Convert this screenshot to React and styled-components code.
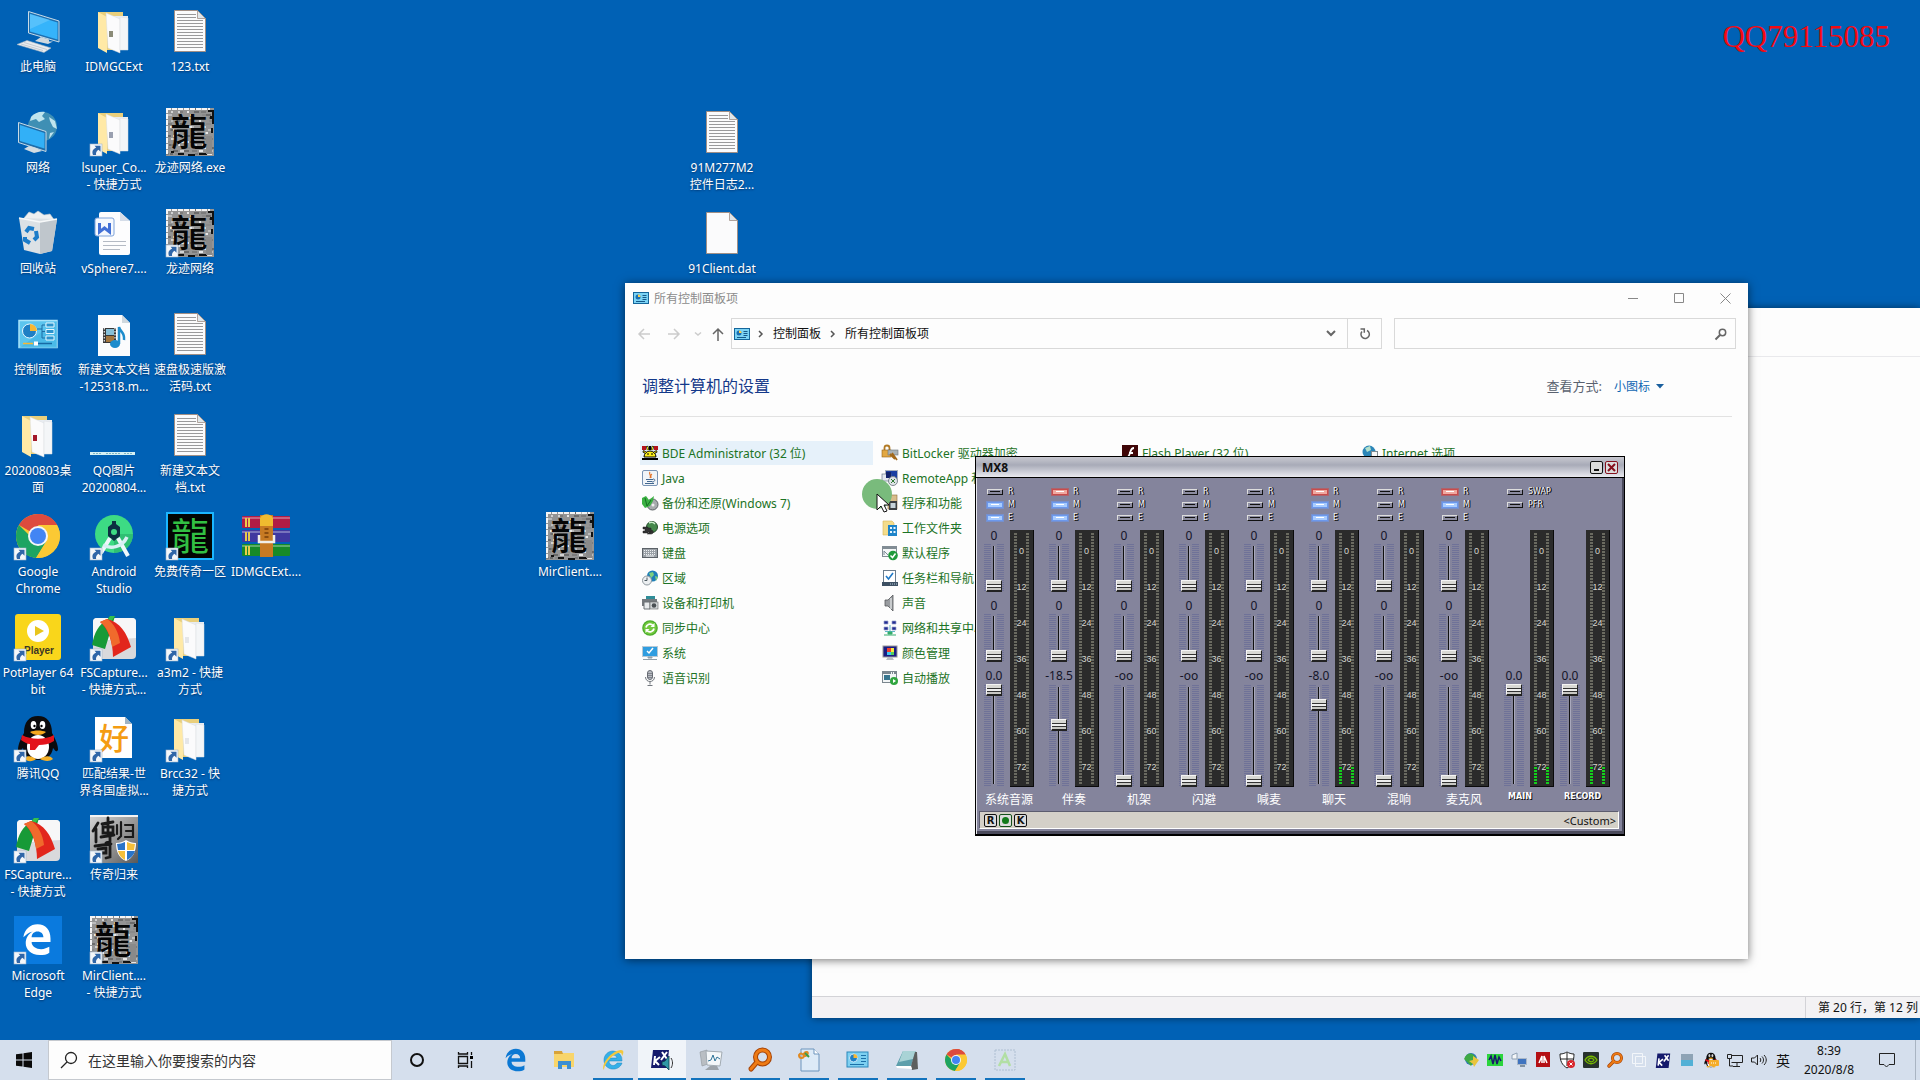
import React, { useState } from 'react';
import styled, { createGlobalStyle } from 'styled-components';

const GlobalStyle = createGlobalStyle`
  * { box-sizing: border-box; }
  body {
    margin: 0;
    overflow: hidden;
    font: 12px/17px 'Noto Sans', 'Noto Sans CJK SC', sans-serif;
    color: #111;
  }
  button, input, select { font: inherit; color: inherit; margin: 0; padding: 0; border: none; background: none; }
  a { text-decoration: none; color: inherit; }
  svg { display: block; flex: none; overflow: visible; }
`;

/* ---------- desktop icons, 48 x 48 ---------- */

const Svg48 = ({ children }) => (
  <svg width="48" height="48" viewBox="0 0 48 48" aria-hidden="true">{children}</svg>
);

const ShortcutMark = () => (
  <g>
    <rect x="0" y="36" width="12" height="12" fill="#f4f7fa" stroke="#9fb4cc" strokeWidth=".6" />
    <path d="M4.500 37.800h6v6l-2-2c-2 1.200-2.800 2.800-2.400 5.200H3c-1.200-3.200-.4-5.800 3.200-7.400z" fill="#2f66a8" />
  </g>
);

const FolderIcon = ({ mark = '#8b8b78', shortcut }) => (
  <Svg48>
    <path d="M8 5h25v38H14L8 40z" fill="#e9cf7c" />
    <path d="M8 5l9 5v36l-9-5z" fill="#ffe9a6" />
    <path d="M23 9h15v34H26z" fill="#e9edf2" />
    <path d="M16 6l14 6v34l-12-5z" fill="#fbfbfc" stroke="#d9dce0" strokeWidth=".5" />
    <path d="M30 10l8 1v32h-8z" fill="#f4f6f8" stroke="#dadde2" strokeWidth=".5" />
    <rect x="19" y="24" width="4" height="6" fill={mark} />
    {shortcut && <ShortcutMark />}
  </Svg48>
);

const TextFileIcon = ({ blank }) => (
  <Svg48>
    <path d="M8.500 3.500h23l8 8v33h-31z" fill="#fbfbfc" stroke="#a08f86" />
    <path d="M31.500 3.500v8h8z" fill="#dfe6ea" stroke="#a08f86" strokeWidth=".8" />
    {!blank && (
      <path d="M11 7.500h19M11 10.500h19M11 13.500h26M11 16.500h26M11 19.500h26M11 22.500h26M11 25.500h26M11 28.500h26M11 31.500h26M11 34.500h26M11 37.500h26M11 40.500h26" stroke="#8d8d90" strokeWidth=".9" />
    )}
  </Svg48>
);

const ComputerIcon = () => (
  <Svg48>
    <path d="M14.500 4.500L45 14v21L14.500 26z" fill="#1d6fb0" stroke="#c9dbe6" />
    <path d="M16 7l27.500 8.500v17L16 24.500z" fill="#35b4fb" />
    <path d="M16 7l20 6-20 9z" fill="#6ccafc" opacity=".6" />
    <path d="M27 30l8 2.500v2h4l-5 2.500-13-3z" fill="#cfd8de" />
    <path d="M3 37.500l10-4 24 7.500-7 4.500z" fill="#e9ecef" stroke="#a9b7c2" strokeWidth=".6" />
    <path d="M7 37l22 6.500M10 35.500l23 7" stroke="#b4bdc5" strokeWidth=".7" />
  </Svg48>
);

const NetworkIcon = () => (
  <Svg48>
    <circle cx="28.500" cy="18.500" r="14.500" fill="#3f8fb4" />
    <path d="M17 9c3-4 9-6 14-5l-3 4 3 3-6 3-3-3-6 2zM35 9l6 4 2 8-4-2-3-6zM36 25l4-1-5 7z" fill="#bfe4ee" />
    <path d="M4.500 14.500l27.500 9v20l-27.500-9z" fill="#1e6da9" stroke="#c9dbe6" />
    <path d="M6 17l24.500 8v15.500L6 33z" fill="#32b0f7" />
    <path d="M15 38l7 2 6 3-8 2-10-4z" fill="#d4dde2" />
  </Svg48>
);

const RecycleIcon = () => (
  <Svg48>
    <path d="M10 9l5-6 5 2 4-3 6 4 6-1 5 7-6 5H12z" fill="#eef0f1" stroke="#c3c9cd" strokeWidth=".6" />
    <path d="M5 9l38 1-5 32-12 3-16-4z" fill="#dce1e5" />
    <path d="M26 13l17-3-5 32-12 3z" fill="#bfc6cc" />
    <path d="M5 9l21 4 17-3" fill="none" stroke="#f6f8f9" strokeWidth="1.500" />
    <g fill="none" stroke="#1c7cc9" strokeWidth="4">
      <path d="M12 23l3-4 5 1" />
      <path d="M22 22l1 6-3 3" />
      <path d="M16 34l-5-3v-3" />
    </g>
  </Svg48>
);

const WordIcon = () => (
  <Svg48>
    <path d="M11 3h19l10 9v32a2 2 0 0 1-2 2H11a2 2 0 0 1-2-2V5a2 2 0 0 1 2-2z" fill="#fdfdfe" />
    <path d="M30 3v9h10z" fill="#d5dde9" />
    <rect x="5" y="9" width="19" height="18" rx="2" fill="#f6f9fe" stroke="#7fa3da" />
    <path d="M9.500 14v9l5-4 5 4v-9" fill="none" stroke="#4270d6" strokeWidth="3" />
    <path d="M13 32.500h23M13 36.500h23M13 40.500h17" stroke="#b4bac4" />
  </Svg48>
);

const MediaIcon = () => (
  <Svg48>
    <path d="M8 5h24l8 8v33H8z" fill="#fbfcfd" />
    <path d="M32 5v8h8z" fill="#cfd8de" />
    <rect x="13" y="18" width="13" height="15" fill="#383838" />
    <rect x="16" y="19" width="8" height="6" fill="#86c0d8" />
    <rect x="16" y="26" width="8" height="6" fill="#a2763f" />
    <path d="M14.300 18v15M25 18v15" stroke="#eee" strokeWidth="1.200" strokeDasharray="1.500 1.500" />
    <ellipse cx="25" cy="34" rx="5" ry="4" fill="#1c8ccc" />
    <path d="M29 34V17c1 5 6 5 5 13" fill="none" stroke="#1c8ccc" strokeWidth="2.500" />
  </Svg48>
);

const PanelArt = () => (
  <g>
    <rect x="5" y="10.500" width="38" height="27" fill="#5cc5ee" stroke="#a8e4fa" strokeWidth="1.500" />
    <path d="M5 38L43 11v27z" fill="#3eb2e4" opacity=".6" />
    <circle cx="15.500" cy="21" r="7" fill="#1f7fc4" stroke="#e9f8ff" />
    <path d="M16 14a7 7 0 0 1 7 7h-7z" fill="#f7b733" />
    <path d="M32 13h8v4h-8zM32 19.500h8v4h-8zM32 26h8v4h-8z" fill="#2b93cd" stroke="#e6f7fe" />
    <path d="M23 19h5v-4h3M28 19v9h3M28 21.500h3" fill="none" stroke="#1d6da5" />
    <path d="M9 33.500h10" stroke="#f7b733" strokeWidth="1.500" />
    <path d="M24 33.500h14" stroke="#176aa5" strokeWidth="1.500" />
    <rect x="20" y="31.500" width="4" height="4" fill="#fff" />
  </g>
);

const PanelIcon = () => <Svg48><PanelArt /></Svg48>;

const StripIcon = () => (
  <Svg48>
    <rect x="0" y="41" width="45" height="3" fill="#d5f0f4" />
    <path d="M3 42.500h9M16 42.500h14M34 42.500h8" stroke="#7fb7c4" strokeDasharray="2 1" />
  </Svg48>
);

const ChromeArt = () => (
  <g>
    <circle cx="24" cy="24" r="22" fill="#fbc934" />
    <path d="M24 24L4.950 13A22 22 0 0 1 43.050 13z" fill="#dd4b3e" />
    <path d="M24 2a22 22 0 0 1 19.050 11H24z" fill="#dd4b3e" />
    <path d="M24 24h-8L4.950 13A22 22 0 0 0 22 45.900L32 30z" fill="#1da462" />
    <path d="M24 13h19.050A22 22 0 0 1 22 45.900l10.500-17z" fill="#fbc934" />
    <circle cx="24" cy="24" r="10" fill="#f4f6f8" />
    <circle cx="24" cy="24" r="8" fill="#4285f4" />
  </g>
);

const ChromeIcon = () => <Svg48><ChromeArt /><ShortcutMark /></Svg48>;

const AndroidIcon = () => (
  <Svg48>
    <circle cx="24" cy="22" r="19" fill="#3ddb84" />
    <path d="M24 22h19a19 19 0 0 1-19 19z" fill="#29b46c" opacity=".7" />
    <path d="M22 9h4v3l4 3v9l-6 5-6-5v-9l4-3z" fill="#0c3042" />
    <circle cx="24" cy="20" r="3" fill="#3ddb84" />
    <path d="M20 26L11 41M28 26l10 18" stroke="#eef7fb" strokeWidth="4" />
    <path d="M13 33c7 4 19 3 24-8" fill="none" stroke="#d8f0f4" strokeWidth="3.500" />
    <ShortcutMark />
  </Svg48>
);

const GreenSealIcon = () => (
  <Svg48>
    <rect x="1" y="1" width="46" height="46" fill="#030503" stroke="#1bb6ff" strokeWidth="2" />
    <text x="24" y="38" textAnchor="middle" fontSize="38" fontFamily="'Noto Sans CJK TC', sans-serif" fill="#32c043">龍</text>
    <ShortcutMark />
  </Svg48>
);

// small fixed sequence that gives the stone face its speckle
const speckle = Array.from({ length: 110 }, (_, i) => ({
  x: (i * 17 + ((i * i) % 11)) % 45,
  y: 3 * ((i * 7 + ((i * i) % 5)) % 16),
  w: 2 + (i % 4),
  fill: ['#e8e8e8', '#7c7c7c', '#bcbcbc', '#8a8a8a', '#d2d2d2', '#6b6b6b'][i % 6],
}));

const StoneSealIcon = ({ shortcut }) => (
  <Svg48>
    <rect width="48" height="48" fill="#949494" />
    {speckle.map((s, i) => (
      <rect key={i} x={s.x} y={s.y} width={s.w} height="2" fill={s.fill} />
    ))}
    <path d="M0 1h44M1 0v46" stroke="#f5f5f5" strokeWidth="2" strokeDasharray="5 1" />
    <path d="M47 2v14M45 8v3M46 20v5M42 3h4M12 46h6M22 47h7M33 46h8M5 44h3" stroke="#111" strokeWidth="2" />
    <path d="M43 28v18" stroke="#8a8a8a" strokeWidth="6" />
    <text x="23" y="38" textAnchor="middle" fontSize="37" fontWeight="500" fontFamily="'Noto Sans CJK TC', sans-serif" fill="#050505">龍</text>
    {shortcut && <ShortcutMark />}
  </Svg48>
);

const LegendIcon = () => (
  <Svg48>
    <defs>
      <linearGradient id="legend" x1="0" y1="0" x2="1" y2="1">
        <stop offset="0" stopColor="#d5d5d5" />
        <stop offset=".6" stopColor="#8f8f8f" />
        <stop offset="1" stopColor="#585858" />
      </linearGradient>
    </defs>
    <rect width="48" height="48" fill="url(#legend)" />
    <path d="M0 1h48" stroke="#f4f4f4" strokeWidth="2" />
    {/* brushed characters of the carved face */}
    <g fill="none" stroke="#1a1a1a" strokeWidth="2.800" strokeLinecap="round">
      <path d="M8 8L3 16M6 14v13M12 9l11-2M18 3v18M13 12h10v6H13zM11 22l13-2M20 20v6l-4 2" />
      <path d="M27 10v9M31 7v14l-3 3M35 10h8v12h-8M36 16h7" strokeWidth="2.200" />
      <path d="M5 31l16-2M8 34l8-1v5H9M20 28v14l-4 1" />
    </g>
    <path d="M26 28c4 0 7-1 10-3 3 2 6 3 10 3 0 9-3 15-10 18-7-3-10-9-10-18z" fill="#fff" />
    <path d="M27 29c3 0 5-1 8-2v8h-7zM37 36h8c-1 4-4 7-8 9z" fill="#2a74c8" />
    <path d="M37 27c3 1 5 2 8 2l-1 6h-7zM28 36h7v9c-4-2-6-5-7-9z" fill="#f5bf3a" />
    <ShortcutMark />
  </Svg48>
);

const PotPlayerIcon = () => (
  <Svg48>
    <rect x="1" y="1" width="46" height="46" rx="3" fill="#f9d61b" />
    <circle cx="24" cy="18" r="11" fill="#fff" />
    <path d="M21 13l9 5-9 5z" fill="#e8c51b" />
    <text x="25" y="41" textAnchor="middle" fontSize="10" fontWeight="700" fontFamily="'Liberation Sans', sans-serif" fill="#3b3524">Player</text>
    <ShortcutMark />
  </Svg48>
);

const CaptureIcon = () => (
  <Svg48>
    <rect x="3" y="5" width="43" height="41" rx="4" fill="#d9d9dc" />
    <path d="M3 28V9a4 4 0 0 1 4-4h35a4 4 0 0 1 4 4v16z" fill="#f7f7f8" />
    <path d="M20 3h5L15 36 2 32C4 20 9 11 17 7z" fill="#179a37" />
    <path d="M20 3h5l-5 7-3-3z" fill="#35c04f" />
    <path d="M10 9l7-3c13 3 20 14 24 28l-18 10C23 29 18 15 10 9z" fill="#e2261c" />
    <path d="M10 9l7-3c7 4 12 14 13 24L22 34C21 24 17 14 10 9z" fill="#f06a2c" />
    <ShortcutMark />
  </Svg48>
);

const PenguinArt = () => (
  <g>
    <path d="M24 2c9 0 14 6 14 17 4 7 6 12 6 17-2 3-3 0-5-2-1 8-7 12-15 12S10 42 9 34c-2 2-3 5-5 2 0-5 2-10 6-17C10 8 15 2 24 2z" fill="#0b0b0d" />
    <ellipse cx="24" cy="33" rx="11" ry="12" fill="#fff" />
    <ellipse cx="19.500" cy="11" rx="2.800" ry="4" fill="#fff" />
    <ellipse cx="28.500" cy="11" rx="2.800" ry="4" fill="#fff" />
    <circle cx="20.500" cy="12" r="1.200" />
    <circle cx="27.500" cy="12" r="1.200" />
    <path d="M16 18c4-2 12-2 16 0-4 4-12 4-16 0z" fill="#f5a91f" />
    <path d="M8 21c9 5 23 5 32 0v6c-5 3-10 4-15 4l-4 5h-5v-6c-3 0-6-2-9-4z" fill="#e3131b" />
    <path d="M10 44c4-3 8-2 12 1-3 3-10 3-12-1zM26 45c4-3 10-4 13 0-3 3-10 2-13 0z" fill="#f5b12a" />
  </g>
);

const PenguinIcon = () => <Svg48><PenguinArt /><ShortcutMark /></Svg48>;

const HaoIcon = () => (
  <Svg48>
    <path d="M5 3h30l7 7v34H5z" fill="#fff" />
    <path d="M35 3v7h7z" fill="#9fb3c4" />
    <text x="24" y="35" textAnchor="middle" fontSize="30" fontWeight="500" fontFamily="'Noto Sans CJK SC', sans-serif" fill="#f49c12">好</text>
    <ShortcutMark />
  </Svg48>
);

const EdgePath = 'M2 13C3 6 8 2 14 2c7 0 11 5 11 12v3H9c0 4 4 6 8 6 3 0 5-1 7-2v5c-2 2-5 2-8 2C8 28 4 23 4 18c0-4 2-8 6-10-4 1-6 3-8 5zm7 0h10c0-3-2-5-5-5s-5 2-5 5z';

const EdgeIcon = () => (
  <Svg48>
    <rect width="48" height="48" fill="#0a7ade" />
    <path d={EdgePath} fill="#fff" transform="translate(7 6) scale(1.180)" />
    <ShortcutMark />
  </Svg48>
);

const RarIcon = () => (
  <Svg48>
    <rect x="0" y="4" width="48" height="12" rx="1" fill="#b01c45" />
    <rect x="0" y="18" width="48" height="12" rx="1" fill="#4038a0" />
    <rect x="0" y="32" width="48" height="12" rx="1" fill="#178a28" />
    <path d="M0 6h48M0 20h48M0 34h48" stroke="#fff" strokeOpacity=".3" strokeWidth="2" />
    <path d="M4 6v9M7 6v9M4 20v9M7 20v9M4 34v9M7 34v9" stroke="#e8cb4b" strokeWidth="2" />
    <rect x="18" y="3" width="13" height="42" fill="#c77a23" />
    <path d="M18 6c3-5 10-5 13 0v8H18z" fill="#efbb2f" />
    <path d="M24.500 16v12" stroke="#8a4c0f" strokeWidth="4" strokeDasharray="2 2" />
    <path d="M17 23v7h15v-7" fill="none" stroke="#f1efe8" strokeWidth="2.500" />
  </Svg48>
);

/* ---------- 16 x 16 icons ---------- */

const Svg16 = ({ size = 16, children }) => (
  <svg width={size} height={size} viewBox="0 0 16 16" aria-hidden="true">{children}</svg>
);

const MiniPanel = () => (
  <Svg16>
    <rect x=".5" y="2.500" width="15" height="11" fill="#7bd3f5" stroke="#15669b" />
    <circle cx="5" cy="7" r="2.500" fill="#1a6fb3" />
    <path d="M5 4.500a2.500 2.500 0 0 1 2.500 2.500H5z" fill="#ffd24d" />
    <path d="M9.500 5.500h4M9.500 7.500h4M9.500 9.500h4M3 11.500h9" stroke="#14588a" />
  </Svg16>
);

const smallIcons = {
  bde: <><path d="M0 1h4v4H0zM12 1h4v4h-4z" fill="#b3121c" /><path d="M2 12a6 6 0 0 1 12 0z" fill="#f8ed1b" stroke="#000" /><path d="M1 6l3 2M5 1l1 4M11 1l-1 4M15 6l-3 2M8 1v4" stroke="#000" strokeWidth="2.200" /><path d="M1.500 6.300l2.500 1.700M5.200 1.500L6 5M10.800 1.500L10 5M14.500 6.300L12 8" stroke="#f8ed1b" /><path d="M0 13h16v2H0z" /><path d="M5 9h2M9 9h2" stroke="#000" /></>,
  java: <><rect x=".5" y=".5" width="15" height="15" rx="1.500" fill="#f0f4f8" stroke="#7893b4" /><path d="M8 2c-2 2 2 3 0 6M10 4c-2 1-1 2-1 4" stroke="#e4762c" strokeWidth="1.200" fill="none" /><path d="M4 9.500h7M5 11.500h5M3 13.500h9M11 9c3 0 2 3-1 3" stroke="#42678f" fill="none" /></>,
  backup: <><circle cx="10.500" cy="9.500" r="5.500" fill="#a7abad" stroke="#5d6366" /><circle cx="11" cy="10" r="1.500" fill="#eee" /><path d="M0 3l4-2 3 4 5-4-1 5-3 5-5 2-3-4z" fill="#3bb143" /><path d="M3 3l2 8 4-6" stroke="#166e22" fill="none" /></>,
  power: <><circle cx="10" cy="7" r="5.500" fill="#45884b" stroke="#264d2b" /><path d="M7 3a5 5 0 0 1 6 1" stroke="#c9ecc9" strokeWidth="1.500" fill="none" /><path d="M1 7h5v1h3v4H6v1H1v-2h2V9H1zM9 10c3 0 3 4 0 4H5" fill="#333" stroke="#222" strokeWidth=".5" /></>,
  keyboard: <><rect x=".5" y="3.500" width="15" height="9" fill="#9ba1a7" stroke="#5c6268" /><path d="M2 5.500h12M2 7.500h12M2 9.500h12" stroke="#eef0f2" strokeDasharray="1 1" /><path d="M4 11h8" stroke="#eef0f2" /></>,
  region: <><circle cx="10.500" cy="6" r="5.500" fill="#1f7fb8" /><path d="M7 3l4-1 1 3-3 3zM13 6l3 1-2 4z" fill="#7ed07f" /><circle cx="5" cy="10.500" r="4.500" fill="#eceff1" stroke="#8d979e" /><path d="M5 7.500v3h-2.500" stroke="#4c5961" fill="none" /></>,
  printer: <><path d="M4 1h9v4H4z" fill="#2f8d98" /><path d="M0 4h15v7H0z" fill="#74797d" /><path d="M2 7h6v7H2z" fill="#e8ebec" stroke="#6d7377" /><rect x="8" y="7" width="8" height="7" fill="#d2d6d8" stroke="#666" strokeWidth=".6" /><circle cx="12" cy="10.500" r="2.300" fill="#4a4f53" /></>,
  sync: <><circle cx="8" cy="8" r="7.800" fill="#4cae2b" /><circle cx="8" cy="8" r="6.500" fill="#73c83e" /><path d="M4 7.500a4 4 0 0 1 7-2M12 8.500a4 4 0 0 1-7 2" stroke="#fff" strokeWidth="1.800" fill="none" /><path d="M12.500 3v4h-4zM3.500 13V9h4z" fill="#fff" /></>,
  system: <><rect x=".5" y="1.500" width="15" height="10" fill="#2f9de0" stroke="#b7c9d5" /><path d="M5 6l2 2 4-5" stroke="#fff" strokeWidth="1.500" fill="none" /><path d="M6 12h4v1H6zM1 14.500h14" fill="#91a0aa" stroke="#91a0aa" /></>,
  mic: <><rect x="5.500" y=".5" width="5" height="9" rx="2.500" fill="#b8bcc2" stroke="#676c74" /><path d="M5.500 3.500h5M5.500 5.500h5M5.500 7.500h5" stroke="#676c74" strokeWidth=".7" /><path d="M3.500 7c0 6 9 6 9 0M8 11.500v3M5.500 15.500h5" fill="none" stroke="#73787f" /></>,
  lock: <><path d="M2.500 6V3a2.500 2.500 0 0 1 5 0v3" fill="none" stroke="#b27a25" strokeWidth="1.800" /><rect x="0" y="5" width="9" height="7" fill="#e2a844" stroke="#96631b" strokeWidth=".6" /><rect x="6" y="5" width="10" height="5" fill="#aab2b6" stroke="#6e777c" strokeWidth=".6" /><path d="M8 9l5 5M10 8l5 7" stroke="#a3691b" strokeWidth="1.800" /></>,
  remote: <><rect x="3.500" y=".5" width="12" height="9" fill="#1a3fa3" stroke="#a9b2bd" /><rect x="0" y="4" width="9" height="7" fill="#e3e8ee" stroke="#6b7a8c" strokeWidth=".7" /><path d="M4 2h5v6H4z" fill="#13246b" /><circle cx="11" cy="11" r="4.500" fill="#dfe3e7" stroke="#7d8790" /><path d="M9 9l2 2-2 2M13 9l-2 2 2 2" stroke="#2f7a34" fill="none" /></>,
  programs: <><rect x="6" y="0" width="9" height="14" fill="#d8bd8b" stroke="#8c6d3a" strokeWidth=".6" /><rect x="7" y="6" width="8" height="9" fill="#3b3f43" /><rect x="8.500" y="8" width="5" height="5" fill="#c6d3da" /></>,
  workfolder: <><path d="M1 1h9l2 2v12H1z" fill="#f3dc8b" stroke="#d8b757" strokeWidth=".6" /><rect x="6" y="5" width="9" height="11" fill="#1d83c9" /><path d="M8 7h2v2H8zM11.500 7h2v2h-2zM8 11h2v2H8zM11.500 11h2v2h-2z" fill="#e9f5fd" /></>,
  defaults: <><rect x=".5" y="1.500" width="14" height="10" fill="#f5f7f8" stroke="#818c94" /><path d="M0 3h15" stroke="#818c94" strokeWidth="2" /><path d="M2 6l4 4M2 10V6" stroke="#7c8c98" fill="none" /><circle cx="11" cy="10.500" r="4.800" fill="#1f9a3b" /><path d="M8.500 10.500l2 2 3-4" stroke="#fff" strokeWidth="1.500" fill="none" /></>,
  taskbar: <><rect x="1.500" y=".5" width="12" height="12" fill="#fff" stroke="#6b7c8c" /><path d="M4 6l2.500 3L11 3" stroke="#1f78c6" strokeWidth="1.600" fill="none" /><path d="M0 12h16v4H0z" fill="#3d5063" /><path d="M8 14h7" stroke="#b8cbdc" strokeDasharray="1 1" /></>,
  sound: <><path d="M3 5h3l5-5v16l-5-5H3z" fill="#999ca0" stroke="#55585c" strokeWidth=".8" /><path d="M9 3v11" stroke="#d9dbdd" strokeWidth="1.500" /></>,
  share: <><path d="M2 1h4v3H2zM10 1h4v3h-4zM2 7h4v3H2zM10 7h4v3h-4z" fill="#232b94" stroke="#98a4c8" strokeWidth=".7" /><path d="M8 5v7M3 11.500h10" stroke="#60b6c8" /><path d="M6 12h4v2H6zM2 15h12" fill="#35ad6d" stroke="#35ad6d" /></>,
  color: <><rect x="1" y="1" width="14" height="11" fill="#1a1d83" stroke="#999" /><path d="M5 3h4v4H5z" fill="#ee4032" /><path d="M9 3h3v4H9z" fill="#f8e83f" /><path d="M5 7h4v3H5z" fill="#41c9f1" /><path d="M9 7h3v3H9z" fill="#54d05c" /><path d="M6 12h4l2 3H4z" fill="#b9bdc3" /></>,
  autoplay: <><rect x=".5" y="1.500" width="14" height="11" fill="#f2f5f6" stroke="#7b878f" /><path d="M0 3h15" stroke="#7b878f" strokeWidth="2" strokeDasharray="9 1 1 1" /><rect x="2" y="5" width="6" height="5" fill="#37758e" /><circle cx="12" cy="11" r="4" fill="#2fa53f" /><path d="M11 9l3 2-3 2z" fill="#fff" /></>,
  flash: <><rect width="16" height="16" fill="#400607" /><path d="M12 3c-3 0-3 2-4 5s-2 5-4 5M7 8h4" stroke="#fff" strokeWidth="1.800" fill="none" /></>,
  internet: <><circle cx="7" cy="7" r="6.500" fill="#2b86b8" /><path d="M3 3l5-2 1 4-4 2zM9 8l4-1-2 5z" fill="#b3e0cc" /><rect x="9.500" y="6.500" width="6" height="8" fill="#f7f7f7" stroke="#7f8a91" /></>,
};

const panelColumns = [
  [
    ['bde', 'BDE Administrator (32 位)'], ['java', 'Java'], ['backup', '备份和还原(Windows 7)'],
    ['power', '电源选项'], ['keyboard', '键盘'], ['region', '区域'], ['printer', '设备和打印机'],
    ['sync', '同步中心'], ['system', '系统'], ['mic', '语音识别'],
  ],
  [
    ['lock', 'BitLocker 驱动器加密'], ['remote', 'RemoteApp 和桌面连接'], ['programs', '程序和功能'],
    ['workfolder', '工作文件夹'], ['defaults', '默认程序'], ['taskbar', '任务栏和导航'], ['sound', '声音'],
    ['share', '网络和共享中心'], ['color', '颜色管理'], ['autoplay', '自动播放'],
  ],
  [['flash', 'Flash Player (32 位)']],
  [['internet', 'Internet 选项']],
];

const desktopItems = [
  { col: 1, row: 1, icon: <ComputerIcon />, lines: ['此电脑'] },
  { col: 1, row: 2, icon: <NetworkIcon />, lines: ['网络'] },
  { col: 1, row: 3, icon: <RecycleIcon />, lines: ['回收站'] },
  { col: 1, row: 4, icon: <PanelIcon />, lines: ['控制面板'] },
  { col: 1, row: 5, icon: <FolderIcon mark="#a3182a" />, lines: ['20200803桌', '面'] },
  { col: 1, row: 6, icon: <ChromeIcon />, lines: ['Google', 'Chrome'] },
  { col: 1, row: 7, icon: <PotPlayerIcon />, lines: ['PotPlayer 64', 'bit'] },
  { col: 1, row: 8, icon: <PenguinIcon />, lines: ['腾讯QQ'] },
  { col: 1, row: 9, icon: <CaptureIcon />, lines: ['FSCapture...', '- 快捷方式'] },
  { col: 1, row: 10, icon: <EdgeIcon />, lines: ['Microsoft', 'Edge'] },
  { col: 2, row: 1, icon: <FolderIcon />, lines: ['IDMGCExt'] },
  { col: 2, row: 2, icon: <FolderIcon mark="#9aa0b0" shortcut />, lines: ['lsuper_Co...', '- 快捷方式'] },
  { col: 2, row: 3, icon: <WordIcon />, lines: ['vSphere7....'] },
  { col: 2, row: 4, icon: <MediaIcon />, lines: ['新建文本文档', '-125318.m...'] },
  { col: 2, row: 5, icon: <StripIcon />, lines: ['QQ图片', '20200804...'] },
  { col: 2, row: 6, icon: <AndroidIcon />, lines: ['Android', 'Studio'] },
  { col: 2, row: 7, icon: <CaptureIcon />, lines: ['FSCapture...', '- 快捷方式...'] },
  { col: 2, row: 8, icon: <HaoIcon />, lines: ['匹配结果-世', '界各国虚拟...'] },
  { col: 2, row: 9, icon: <LegendIcon />, lines: ['传奇归来'] },
  { col: 2, row: 10, icon: <StoneSealIcon shortcut />, lines: ['MirClient....', '- 快捷方式'] },
  { col: 3, row: 1, icon: <TextFileIcon />, lines: ['123.txt'] },
  { col: 3, row: 2, icon: <StoneSealIcon />, lines: ['龙迹网络.exe'] },
  { col: 3, row: 3, icon: <StoneSealIcon shortcut />, lines: ['龙迹网络'] },
  { col: 3, row: 4, icon: <TextFileIcon />, lines: ['速盘极速版激', '活码.txt'] },
  { col: 3, row: 5, icon: <TextFileIcon />, lines: ['新建文本文', '档.txt'] },
  { col: 3, row: 6, icon: <GreenSealIcon />, lines: ['免费传奇一区'] },
  { col: 3, row: 7, icon: <FolderIcon mark="#e4e6ea" shortcut />, lines: ['a3m2 - 快捷', '方式'] },
  { col: 3, row: 8, icon: <FolderIcon mark="#e4e6ea" shortcut />, lines: ['Brcc32 - 快', '捷方式'] },
  { col: 4, row: 6, icon: <RarIcon />, lines: ['IDMGCExt....'] },
  { col: 8, row: 6, icon: <StoneSealIcon />, lines: ['MirClient....'] },
  { col: 10, row: 2, icon: <TextFileIcon />, lines: ['91M277M2', '控件日志2...'] },
  { col: 10, row: 3, icon: <TextFileIcon blank />, lines: ['91Client.dat'] },
];

/* ---------- mixer ---------- */

const channels = [
  { name: '系统音源', lit: 'ME', gain: '0.0', level: 91 },
  { name: '伴奏', lit: 'RME', gain: '-18.5', level: 56 },
  { name: '机架', lit: '', gain: '-oo', level: 0 },
  { name: '闪避', lit: '', gain: '-oo', level: 0 },
  { name: '喊麦', lit: '', gain: '-oo', level: 0 },
  { name: '聊天', lit: 'RME', gain: '-8.0', level: 76, active: true },
  { name: '混响', lit: '', gain: '-oo', level: 0 },
  { name: '麦克风', lit: 'RM', gain: '-oo', level: 0 },
];

function Led({ text, tone, on }) {
  const [checked, setChecked] = useState(on);
  return (
    <LedLabel>
      <LedBox type="checkbox" $tone={tone} checked={checked} onChange={() => setChecked(!checked)} />
      {text}
    </LedLabel>
  );
}

function Slider({ label, value, max, tall }) {
  const [level, setLevel] = useState(value);
  return (
    <Range
      type="range"
      aria-label={label}
      min="0"
      max={max}
      value={level}
      $tall={tall}
      onChange={(e) => setLevel(Number(e.target.value))}
    />
  );
}

const LevelMeter = ({ active }) => (
  <Meter>
    <Segments $active={active} />
    <MeterScale>
      {[0, 12, 24, 36, 48, 60, 72].map((n) => <span key={n}>{n}</span>)}
    </MeterScale>
    <Segments $active={active} />
  </Meter>
);

function Channel({ name, lit, gain, level, active }) {
  return (
    <Strip>
      <LedGroup>
        <Led text="R" tone="red" on={lit.includes('R')} />
        <Led text="M" tone="blue" on={lit.includes('M')} />
        <Led text="E" tone="blue" on={lit.includes('E')} />
      </LedGroup>
      <Faders>
        <FaderColumn>
          <FaderValue>0</FaderValue>
          <Slider label={`${name} 1`} value={0} max={37} />
          <FaderValue $spaced>0</FaderValue>
          <Slider label={`${name} 2`} value={0} max={37} />
          <FaderValue $spaced>{gain}</FaderValue>
          <Slider label={name} value={level} max={91} tall />
        </FaderColumn>
        <LevelMeter active={active} />
      </Faders>
      <StripName>{name}</StripName>
    </Strip>
  );
}

const MasterStrip = ({ name, children }) => (
  <Strip $narrow>
    <LedGroup>{children}</LedGroup>
    <Faders>
      <FaderColumn>
        <FaderValue>0.0</FaderValue>
        <Slider label={name} value={91} max={91} tall />
      </FaderColumn>
      <LevelMeter active />
    </Faders>
    <MasterName>{name}</MasterName>
  </Strip>
);

const MixerWindow = () => (
  <Mixer>
    <MixerTitle>
      MX8
      <MixerTitleButtons>
        <PixelButton aria-label="最小化">
          <svg width="9" height="9"><path d="M2 7h5" stroke="#111" strokeWidth="2" /></svg>
        </PixelButton>
        <PixelButton $tone="#86101c" aria-label="关闭">
          <svg width="9" height="9"><path d="M1 1l7 7M8 1L1 8" stroke="#86101c" strokeWidth="2" /></svg>
        </PixelButton>
      </MixerTitleButtons>
    </MixerTitle>
    <Strips>
      {channels.map((c) => <Channel key={c.name} {...c} />)}
      <MasterStrip name="MAIN">
        <Led text="SWAP" tone="blue" on={false} />
        <Led text="PFR" tone="blue" on={false} />
      </MasterStrip>
      <MasterStrip name="RECORD" />
    </Strips>
    <MixerStatus>
      <PixelButton>R</PixelButton>
      <PixelButton $tone="#14501a" aria-label="启用">
        <svg width="9" height="9"><circle cx="4.500" cy="4.500" r="3.500" fill="#127a1b" /></svg>
      </PixelButton>
      <PixelButton>K</PixelButton>
      <Preset>&lt;Custom&gt;</Preset>
    </MixerStatus>
  </Mixer>
);

/* ---------- control panel window ---------- */

const Arrow = ({ d, color }) => (
  <svg width="14" height="14" viewBox="0 0 14 14" fill="none" stroke={color} strokeWidth="1.500"><path d={d} /></svg>
);

const Chevron = () => (
  <svg width="6" height="8" viewBox="0 0 6 8" fill="none" stroke="#555" strokeWidth="1.500"><path d="M1 1l3 3-3 3" /></svg>
);

const ControlPanelWindow = () => (
  <PanelWindow>
    <TitleBar>
      <MiniPanel />
      所有控制面板项
      <WindowButtons>
        <button aria-label="最小化"><svg width="10" height="10"><path d="M0 5.500h10" stroke="#888" /></svg></button>
        <button aria-label="最大化"><svg width="10" height="10"><path d="M.5.500h9v9h-9z" fill="none" stroke="#888" /></svg></button>
        <button aria-label="关闭"><svg width="11" height="11"><path d="M.5.500l10 10M10.500.500l-10 10" stroke="#888" /></svg></button>
      </WindowButtons>
    </TitleBar>
    <NavRow>
      <NavButton aria-label="后退"><Arrow color="#ccc" d="M13 7H2M7 2L2 7l5 5" /></NavButton>
      <NavButton aria-label="前进"><Arrow color="#ccc" d="M1 7h11M7 2l5 5-5 5" /></NavButton>
      <NavButton $width={18} aria-label="最近的位置">
        <svg width="6" height="4" fill="none" stroke="#ccc" strokeWidth="1.500"><path d="M0 .5l3 2.500 3-2.500" /></svg>
      </NavButton>
      <NavButton $width={22} aria-label="上移"><Arrow color="#666" d="M7 14V2M2 7l5-5 5 5" /></NavButton>
      <AddressBar>
        <MiniPanel />
        <Chevron />
        <a href="#panel">控制面板</a>
        <Chevron />
        <a href="#all">所有控制面板项</a>
        <AddressEnd>
          <NavButton $width={32} aria-label="展开地址">
            <svg width="10" height="6" fill="none" stroke="#666" strokeWidth="2"><path d="M1 0l4 4 4-4" /></svg>
          </NavButton>
          <Refresh aria-label="刷新">
            <svg width="12" height="12" viewBox="0 0 12 12" fill="none" stroke="#666" strokeWidth="1.500">
              <path d="M8 2.500a4.200 4.200 0 1 1-5 1M1.500 1h3.800v3.800" />
            </svg>
          </Refresh>
        </AddressEnd>
      </AddressBar>
      <SearchField>
        <input type="search" aria-label="搜索控制面板" />
        <svg width="12" height="12" viewBox="0 0 12 12" fill="none" stroke="#666" strokeWidth="1.500">
          <circle cx="7.500" cy="4.500" r="3.200" /><path d="M5 7l-4.500 4.500" strokeWidth="2" />
        </svg>
      </SearchField>
    </NavRow>
    <PanelHeader>
      <h1>调整计算机的设置</h1>
      <ViewMode>
        查看方式:
        <select defaultValue="small">
          <option value="small">小图标</option>
          <option value="large">大图标</option>
          <option value="category">类别</option>
        </select>
        <svg width="8" height="5"><path d="M0 0h8L4 4.500z" fill="#1a5f9e" /></svg>
      </ViewMode>
    </PanelHeader>
    <PanelGrid>
      {panelColumns.map((items, c) => (
        <PanelColumn key={c}>
          {items.map(([icon, label]) => (
            <PanelItem key={icon} href={`#${icon}`} $hover={icon === 'bde'}>
              <Svg16>{smallIcons[icon]}</Svg16>
              {label}
            </PanelItem>
          ))}
        </PanelColumn>
      ))}
    </PanelGrid>
  </PanelWindow>
);

/* ---------- taskbar ---------- */

const Svg24 = ({ children, box = 24 }) => (
  <svg width="24" height="24" viewBox={`0 0 ${box} ${box}`} aria-hidden="true">{children}</svg>
);

const KxArt = () => (
  <g>
    <path d="M3 2h16l-2 18H1z" fill="#151a6c" />
    <path d="M5 8l-1 9M10 9l-5 4 4 4M12 4l5 7M17 4l-6 8" stroke="#fff" strokeWidth="2" fill="none" />
  </g>
);

const taskItems = [
  { label: 'Cortana', icon: <Svg24><circle cx="12" cy="12" r="6" fill="none" stroke="#111" strokeWidth="2" /></Svg24> },
  { label: '任务视图', icon: <Svg24><path d="M4.500 4v2h9V4M4.500 20v-2h9v2M4.500 8.500h9v7h-9zM17.500 4v3M17.500 13v7" fill="none" stroke="#111" strokeWidth="1.300" /><rect x="16" y="8" width="3" height="3" /></Svg24> },
  { label: 'Microsoft Edge', icon: <Svg24 box={28}><path d={EdgePath} fill="#0c78d3" transform="translate(1 -1)" /></Svg24> },
  { label: '文件资源管理器', icon: <Svg24><path d="M2 5h20v14H2z" fill="#f8d56b" /><path d="M2 3h8l1 3H2z" fill="#d8a339" /><path d="M6 21v-8h13v8h-4v-4h-5v4z" fill="#3c8fd3" /></Svg24> },
  { label: 'Internet Explorer', open: true, icon: <Svg24><path d="M12 3a9 9 0 0 1 9 10H8c0 5 6 6 8 2h5c-3 9-18 8-18-3 0-5 4-9 9-9zM8 10h8c-1-4-7-4-8 0z" fill="#35b0e8" stroke="#1a84c0" strokeWidth=".5" /><path d="M3 22c-4-5 8-20 17-20 3 0 3 3 1 6 0-3-1-4-4-3C9 8 3 17 3 22z" fill="#f3c83d" /></Svg24> },
  { label: 'kX Mixer', open: true, current: true, icon: <Svg24><KxArt /><path d="M12 14l3-1 4-5v14l-4-4-3-1z" fill="#2f97a6" stroke="#0c3c4c" strokeWidth=".8" /><path d="M21 10c2 3 2 7 0 10" fill="none" stroke="#333" /></Svg24> },
  { label: '性能监视器', open: true, icon: <Svg24><path d="M1 4l7-2 1 14-6 2z" fill="#b9bec3" stroke="#8e959b" strokeWidth=".6" /><path d="M7 3l16 1-2 14-13-1z" fill="#f4f7f9" stroke="#a2abb2" /><path d="M9 13l3-1 2-5 2 6 2-4 3 2" fill="none" stroke="#2e7398" /><path d="M11 18h7l2 4H6z" fill="#9da3a9" /></Svg24> },
  { label: '放大镜', open: true, icon: <Svg24><circle cx="14.500" cy="9" r="7" fill="none" stroke="#a64205" strokeWidth="5" /><path d="M9 14l-6 7" stroke="#a64205" strokeWidth="5" strokeLinecap="round" /><circle cx="14.500" cy="9" r="7" fill="none" stroke="#ee7b14" strokeWidth="3" /><path d="M9 14l-6 7" stroke="#ee7b14" strokeWidth="3" strokeLinecap="round" /></Svg24> },
  { label: '脚本', open: true, icon: <Svg24><path d="M4 1h13l5 5v17H4z" fill="#dceaf7" stroke="#6d95bd" /><path d="M17 1v5h5" fill="#fff" stroke="#6d95bd" /><path d="M2 7c3-5 5 4 8 0s-3-4-3 0-5 4-5 0z" fill="none" stroke="#e08a22" strokeWidth="2" /><path d="M8 5l4 4" stroke="#3d9a45" strokeWidth="2" /></Svg24> },
  { label: '控制面板', open: true, icon: <Svg24><rect x="1" y="4" width="21" height="15" fill="#7dd0f1" stroke="#2a87bb" /><circle cx="7.500" cy="10" r="4" fill="#1f7fc4" stroke="#e9f8ff" strokeWidth=".8" /><path d="M7.500 6a4 4 0 0 1 4 4h-4z" fill="#f7b733" /><path d="M15 7.500h5M15 10.500h5M15 13.500h5M4 16.500h14" stroke="#1b70a8" /></Svg24> },
  { label: '记事本', open: true, icon: <Svg24><path d="M8 3h13l-5 15H1z" fill="#5d9fac" /><path d="M8 3h13l-3 8-14 3z" fill="#a9d3d6" /><path d="M20 4h2l1 17-6 1-1-4z" fill="#5d5f5e" /><path d="M1 18h15l1 3-15-1z" fill="#fff" /></Svg24> },
  { label: 'Google Chrome', open: true, icon: <Svg24 box={48}><ChromeArt /></Svg24> },
  { label: '字体', open: true, icon: <Svg24><rect x="2" y="2" width="20" height="20" fill="none" stroke="#aebfd2" strokeDasharray="2 1" /><path d="M6 18L12 6l5 12M8 14h7" fill="none" stroke="#b2dfa4" strokeWidth="2.500" /></Svg24> },
];

const trayIcons = [
  ['下载管理', <><circle cx="8" cy="7" r="6" fill="#2b74c3" /><path d="M1 7c3-7 9-7 12-1l-5 8z" fill="#3ea944" /><path d="M6 9l4-1V4l6 4-5 7-1-3z" fill="#e9c43c" /></>],
  ['声卡', <><rect y="2" width="16" height="12" fill="#2ad53c" /><path d="M2 8l2-4 2 8 2-9 2 9 2-7 2 4" fill="none" stroke="#1a1a6a" strokeWidth="1.500" /></>],
  ['远程连接', <><path d="M1 3l5-2v6H1z" fill="#f4f6f8" stroke="#8ea0b4" /><rect x="6.500" y="6.500" width="9" height="6" fill="#3f73bf" stroke="#aab8c8" /><path d="M9 14h5" stroke="#8292a2" strokeWidth="2" /></>],
  ['Adobe', <><rect x="1" width="14" height="15" fill="#b40f14" /><path d="M4 11l3-7v7M12 11L9 4v7" stroke="#fff" strokeWidth="1.500" fill="none" /></>],
  ['安全中心', <><path d="M1 2c3 0 5-1 7-2 2 1 4 2 7 2 0 7-2 11-7 14C3 13 1 9 1 2z" fill="#fff" stroke="#222" /><path d="M8 1v13M1 7h14" stroke="#222" /><circle cx="12" cy="12" r="4" fill="#d8252c" /><path d="M10.500 10.500l3 3M13.500 10.500l-3 3" stroke="#fff" /></>],
  ['NVIDIA', <><rect width="16" height="16" rx="1" fill="#27322d" /><path d="M2 8c3-5 9-5 12 0-3 5-9 5-12 0zM5 8c2-3 5-2 6 0-2 3-4 2-6 0z" fill="none" stroke="#76b900" strokeWidth="1.300" /></>],
  ['放大镜', <><circle cx="10" cy="6" r="4.500" fill="none" stroke="#a64205" strokeWidth="3" /><path d="M6.500 9.500L2 14" stroke="#a64205" strokeWidth="3.500" strokeLinecap="round" /><circle cx="10" cy="6" r="4.500" fill="none" stroke="#ee7b14" strokeWidth="1.800" /><path d="M6.500 9.500L2 14" stroke="#ee7b14" strokeWidth="2" strokeLinecap="round" /></>],
  ['剪贴板', <><path d="M1.500 1.500h10v10h-10zM4.500 4.500h10v10h-10z" fill="none" stroke="#f3f6fa" /></>],
  ['kX', <g transform="scale(.8)"><KxArt /></g>],
  ['便笺', <><rect x="2" y="2" width="12" height="12" fill="#8ea3b5" /><rect x="2" y="8" width="12" height="6" fill="#52b0d6" /></>],
  ['QQ', <><g transform="scale(.33)"><PenguinArt /></g><rect x="6" y="8" width="10" height="6" rx="1" fill="#f5ad29" /><path d="M8 11h6" stroke="#fff" strokeDasharray="1 1" /></>],
  ['网络', <path d="M4.500 3.500h11v7h-11M10 10v4M6 14.500h7M.5 2.500h4v4h-4zM2.500 6v8H6" fill="none" stroke="#222" />],
  ['音量', <path d="M.5 6v4h3l3 3V3l-3 3zM9 6c1 1 1 3 0 4M11 4.500c2 2 2 5 0 7M13 3c3 3 3 7 0 10" fill="none" stroke="#222" />],
];

const Taskbar = () => (
  <Bar>
    <TaskButton aria-label="开始">
      <svg width="16" height="16"><path d="M0 2.300l6.500-.9v6.100H0zM7.500 1.200L16 0v7.500H7.500zM0 8.500h6.500v6.100L0 13.700zM7.500 8.500H16V16l-8.500-1.200z" fill="#0a0a0a" /></svg>
    </TaskButton>
    <TaskSearch>
      <svg width="18" height="18" viewBox="0 0 18 18" fill="none" stroke="#222" strokeWidth="1.300">
        <circle cx="11" cy="7" r="5.500" /><path d="M7 11l-6 6" />
      </svg>
      <input type="text" aria-label="搜索" placeholder="在这里输入你要搜索的内容" />
    </TaskSearch>
    <TaskItems>
      {taskItems.map((t) => (
        <TaskButton key={t.label} aria-label={t.label} $open={t.open} $current={t.current}>{t.icon}</TaskButton>
      ))}
    </TaskItems>
    <Tray>
      {trayIcons.map(([label, art]) => (
        <TrayButton key={label} aria-label={label}><Svg16>{art}</Svg16></TrayButton>
      ))}
      <ImeButton>英</ImeButton>
      <Clock>
        <span>8:39</span>
        <span>2020/8/8</span>
      </Clock>
      <TaskButton aria-label="通知">
        <svg width="16" height="16" fill="none" stroke="#222"><path d="M.5 1.500h15v11H10l-2.500 2.500L5 12.500H.5z" /></svg>
      </TaskButton>
      <ShowDesktop aria-label="显示桌面" />
    </Tray>
  </Bar>
);

export default function App() {
  return (
    <Screen>
      <GlobalStyle />
      <Desktop>
        <IconGrid>
          {desktopItems.map(({ col, row, icon, lines }) => (
            <DesktopItem key={`${col}-${row}`} $col={col} $row={row}>
              {icon}
              <DesktopLabel>{lines.join('\n')}</DesktopLabel>
            </DesktopItem>
          ))}
        </IconGrid>
        <Watermark>QQ79115085</Watermark>
        <EditorWindow>
          <EditorTop />
          <EditorBody />
          <EditorStatus><span>第 20 行，第 12 列</span></EditorStatus>
        </EditorWindow>
        <ControlPanelWindow />
        <MixerWindow />
        <Pointer>
          <svg width="32" height="40" viewBox="0 0 32 40">
            <circle cx="15" cy="15" r="15" fill="#79bb7c" />
            <path d="M15 15v16l4-4 3 6 3-1-3-6h5z" fill="#fff" stroke="#111" />
          </svg>
        </Pointer>
      </Desktop>
      <Taskbar />
    </Screen>
  );
}

const Screen = styled.div`
  display: flex;
  flex-direction: column;
  height: 100vh;
  background: #0061b5;
`;

const Desktop = styled.main`
  position: relative;
  flex: 1;
  min-height: 0;
  overflow: hidden;
`;

const IconGrid = styled.div`
  display: grid;
  grid-template-columns: repeat(10, 76px);
  grid-auto-rows: 101px;
`;

const DesktopItem = styled.button`
  grid-column: ${(p) => p.$col};
  grid-row: ${(p) => p.$row};
  display: flex;
  flex-direction: column;
  align-items: center;
  gap: 3px;
  padding-top: 7px;
`;

const DesktopLabel = styled.span`
  color: #fff;
  white-space: pre;
  text-align: center;
  text-shadow: 0 1px 2px rgba(0, 20, 60, 0.6);
`;

const Watermark = styled.div`
  position: absolute;
  top: 18px;
  right: 30px;
  color: #f40a12;
  font: 31px/38px 'Liberation Serif', serif;
`;

const EditorWindow = styled.section`
  position: absolute;
  top: 308px;
  left: 812px;
  right: 0;
  bottom: 22px;
  display: flex;
  flex-direction: column;
  background: #fdfdfd;
  box-shadow: 0 0 8px rgba(0, 0, 0, 0.5);
`;

const EditorTop = styled.div`
  height: 49px;
  border-bottom: 1px solid #e9e9ec;
`;

const EditorBody = styled.div`
  flex: 1;
`;

const EditorStatus = styled.footer`
  display: flex;
  justify-content: flex-end;
  height: 22px;
  border-top: 1px solid #d3d3d7;
  background: #f3f2f4;
  white-space: nowrap;
  line-height: 21px;

  span {
    width: 115px;
    padding-left: 12px;
    border-left: 1px solid #d3d3d7;
  }
`;

const PanelWindow = styled.section`
  position: absolute;
  top: 283px;
  left: 625px;
  width: 1123px;
  height: 676px;
  background: #fdfdfd;
  box-shadow: 0 1px 9px rgba(0, 0, 0, 0.55);
`;

const TitleBar = styled.header`
  display: flex;
  align-items: center;
  gap: 5px;
  height: 30px;
  padding-left: 8px;
  color: #8c8c8c;
`;

const WindowButtons = styled.div`
  display: flex;
  align-self: stretch;
  margin-left: auto;

  button {
    display: grid;
    place-items: center;
    width: 46px;
  }
`;

const NavRow = styled.div`
  display: flex;
  height: 31px;
  margin-top: 5px;
  padding: 0 12px 0 4px;
`;

const NavButton = styled.button`
  display: grid;
  place-items: center;
  width: ${(p) => p.$width || 30}px;
`;

const AddressBar = styled.div`
  display: flex;
  flex: 1;
  align-items: center;
  gap: 8px;
  margin: 0 12px 0 2px;
  padding-left: 2px;
  border: 1px solid #d9d9d9;

  a {
    padding: 0 1px;
  }
`;

const AddressEnd = styled.div`
  display: flex;
  align-self: stretch;
  margin-left: auto;
`;

const Refresh = styled.button`
  display: grid;
  place-items: center;
  width: 34px;
  border-left: 1px solid #d9d9d9;
`;

const SearchField = styled.div`
  display: flex;
  align-items: center;
  width: 342px;
  padding: 0 8px;
  border: 1px solid #d9d9d9;

  input {
    flex: 1;
    outline: none;
  }
`;

const PanelHeader = styled.div`
  display: flex;
  align-items: center;
  justify-content: space-between;
  height: 68px;
  margin: 0 16px 0 15px;
  padding: 8px 68px 0 2px;
  border-bottom: 1px solid #e2e2e2;

  h1 {
    margin: 0;
    color: #14398a;
    font-size: 16px;
    font-weight: 400;
  }
`;

const ViewMode = styled.label`
  display: flex;
  align-items: center;
  color: #5a6270;
  font-size: 13px;

  select {
    appearance: none;
    width: 42px;
    margin-left: 12px;
    color: #0f66b3;
    font-size: 12px;
  }
`;

const PanelGrid = styled.div`
  display: grid;
  grid-template-columns: repeat(4, 240px);
  margin: 24px 0 0 15px;
`;

const PanelColumn = styled.div`
  display: flex;
  flex-direction: column;
  gap: 1px;
`;

const PanelItem = styled.a`
  display: flex;
  align-items: center;
  gap: 4px;
  width: 233px;
  height: 24px;
  padding-left: 2px;
  color: #1c7325;
  white-space: nowrap;
  background: ${(p) => (p.$hover ? '#e6f1fa' : 'none')};
`;

const Mixer = styled.section`
  position: absolute;
  top: 456px;
  left: 975px;
  width: 650px;
  background: #84849c;
  border: 1px solid #000;
  border-bottom-width: 2px;
  box-shadow: inset 1px 1px #e8e8ee, inset -2px -3px #4b4b5c;
`;

const MixerTitle = styled.header`
  display: flex;
  align-items: center;
  height: 21px;
  padding: 0 6px;
  border-bottom: 1px solid #000;
  background: linear-gradient(#c8c8d0, #a8abb8 40%, #e9e9ef);
  font-weight: 700;
`;

const MixerTitleButtons = styled.div`
  display: flex;
  gap: 2px;
  margin-left: auto;
`;

const PixelButton = styled.button`
  display: grid;
  place-items: center;
  width: 13px;
  height: 13px;
  border: 1px solid ${(p) => p.$tone || '#111'};
  border-radius: 2px;
  background: #dcdcdc;
  font: 700 10px/11px 'DejaVu Sans', sans-serif;
`;

const Strips = styled.div`
  display: flex;
  padding: 7px 0 0 1px;
`;

const Strip = styled.div`
  width: ${(p) => (p.$narrow ? 56 : 65)}px;
  padding-left: 7px;
`;

const LedGroup = styled.div`
  height: 45px;
  padding-left: 3px;
`;

const LedLabel = styled.label`
  display: flex;
  align-items: center;
  gap: 5px;
  height: 13px;
  color: #f4f4f8;
  white-space: nowrap;
  font: 8px/13px 'DejaVu Sans', sans-serif;
  text-shadow: 1px 1px #111, 1px 0 #111;
`;

const ledTones = {
  red: ['#f0a8a0', '#c84c4c'],
  blue: ['#a8ccff', '#6c98ec'],
};

const LedBox = styled.input`
  appearance: none;
  width: 16px;
  height: 6px;
  border: 1px solid #111;
  border-top-color: #ddd;
  border-left-color: #ddd;
  background: linear-gradient(#111, #111) center / 10px 1px no-repeat, #8c8ca0;

  &:checked {
    border-color: ${(p) => ledTones[p.$tone][1]};
    background: linear-gradient(#fff, #fff) center / 8px 1px no-repeat, ${(p) => ledTones[p.$tone][0]};
    box-shadow: 0 0 0 1px ${(p) => ledTones[p.$tone][1]}99;
  }
`;

const Faders = styled.div`
  display: flex;
  gap: 6px;
  height: 257px;
`;

const FaderColumn = styled.div`
  display: flex;
  flex-direction: column;
  justify-content: flex-end;
  width: 20px;
`;

const FaderValue = styled.span`
  display: flex;
  justify-content: center;
  height: 13px;
  margin-top: ${(p) => (p.$spaced ? 8 : 0)}px;
  color: #151528;
  line-height: 12px;
  white-space: nowrap;
`;

const Range = styled.input`
  appearance: none;
  writing-mode: vertical-lr;
  direction: rtl;
  width: 20px;
  height: ${(p) => (p.$tall ? 103 : 49)}px;
  margin-top: ${(p) => (p.$tall ? 1 : 0)}px;
  background:
    linear-gradient(90deg, #111 0 1px, #a8a8bc 1px 2px) 9px center / 2px calc(100% - 6px) no-repeat,
    linear-gradient(90deg, transparent 7px, #84849c 7px 13px, transparent 13px),
    repeating-linear-gradient(#84849c 0 1px, #6f7298 1px 2px);

  &::-webkit-slider-thumb {
    appearance: none;
    width: 16px;
    height: 12px;
    border: 1px solid #f4f4f4;
    border-right-color: #222;
    border-bottom: 2px solid #222;
    background: linear-gradient(#d8d8d4 0 3px, #333 3px 4px, #eee 4px 6px, #333 6px 7px, #c8c8c4 7px);
  }
`;

const Meter = styled.div`
  display: flex;
  justify-content: space-between;
  width: 24px;
  padding: 3px 4px 2px;
  background: #2b2b2b;
  border-right: 1px solid #0a0a0a;
  border-bottom: 1px solid #0a0a0a;
`;

const Segments = styled.div`
  width: 3px;
  background:
    repeating-linear-gradient(transparent 0 2px, #2b2b2b 2px 3px),
    ${(p) => (p.$active ? 'linear-gradient(0deg, #14cf1c 18px, #6a6a60 18px)' : '#6a6a60')};
`;

const MeterScale = styled.div`
  display: flex;
  flex-direction: column;
  align-items: center;
  gap: 26px;
  width: 9px;
  padding-top: 13px;
  color: #d8d8d0;
  font: 9px/10px 'Liberation Sans', sans-serif;
`;

const StripName = styled.div`
  width: 50px;
  height: 20px;
  padding-top: 4px;
  color: #fff;
  line-height: 17px;
  text-align: center;
  white-space: nowrap;
`;

const MasterName = styled.div`
  padding: 4px 0 0 4px;
  color: #fff;
  font: 700 8px/12px 'DejaVu Sans', sans-serif;
  text-shadow: 1px 1px #111;
`;

const MixerStatus = styled.footer`
  display: flex;
  align-items: center;
  gap: 2px;
  height: 18px;
  margin: 4px 5px 5px 3px;
  padding: 0 2px 0 4px;
  border: 1px solid #5c5c6e;
  border-right-color: #fff;
  border-bottom-color: #fff;
  background: #d4d0c8;
`;

const Preset = styled.span`
  margin-left: auto;
  font-size: 11px;
`;

const Pointer = styled.div`
  position: absolute;
  top: 479px;
  left: 862px;
  pointer-events: none;
`;

const Bar = styled.nav`
  display: flex;
  height: 40px;
  background: #d5dfed;
`;

const TaskButton = styled.button`
  position: relative;
  display: grid;
  place-items: center;
  width: 48px;
  background: ${(p) => (p.$current ? '#f0f4f9' : 'none')};

  &::after {
    content: '';
    display: ${(p) => (p.$open ? 'block' : 'none')};
    position: absolute;
    bottom: 0;
    left: ${(p) => (p.$current ? 0 : 4)}px;
    right: ${(p) => (p.$current ? 0 : 4)}px;
    height: 2px;
    background: #1273bd;
  }
`;

const TaskSearch = styled.label`
  display: flex;
  align-items: center;
  gap: 10px;
  width: 344px;
  padding-left: 11px;
  border: 1px solid #c5c9cf;
  background: #fdfdfd;

  input {
    flex: 1;
    outline: none;
    font-size: 14px;
  }

  input::placeholder {
    color: #333;
    opacity: 1;
  }
`;

const TaskItems = styled.div`
  display: flex;
  gap: 1px;
  margin-left: 1px;
`;

const Tray = styled.div`
  display: flex;
  margin-left: auto;
`;

const TrayButton = styled.button`
  display: grid;
  place-items: center;
  width: 24px;
`;

const ImeButton = styled.button`
  width: 24px;
  font-size: 14px;
`;

const Clock = styled.div`
  display: flex;
  flex-direction: column;
  align-items: center;
  justify-content: center;
  width: 68px;
  line-height: 19px;
`;

const ShowDesktop = styled.button`
  width: 5px;
  margin-left: 4px;
  border-left: 1px solid #a9b4c2;
`;
